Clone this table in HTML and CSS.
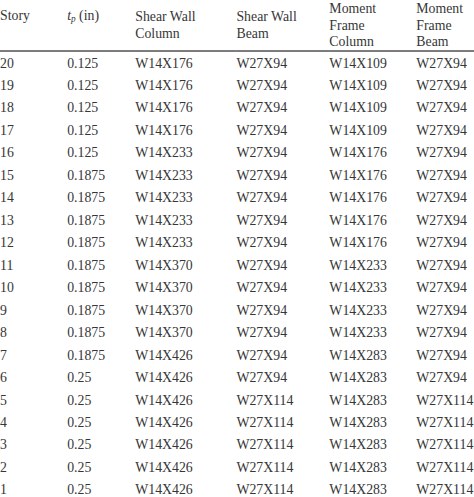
FILE: index.html
```html
<!DOCTYPE html>
<html>
<head>
<meta charset="utf-8">
<link rel="stylesheet" href="styles.css">
</head>
<body>
<div class="frame">
<table class="tbl">
<colgroup>
<col class="c1"><col class="c2"><col class="c3"><col class="c4"><col class="c5"><col class="c6">
</colgroup>
<thead>
<tr>
<th class="top">Story</th>
<th class="top"><i>t<sub>p</sub></i> (in)</th>
<th>Shear Wall<br>Column</th>
<th>Shear Wall<br>Beam</th>
<th>Moment<br>Frame<br>Column</th>
<th>Moment<br>Frame<br>Beam</th>
</tr>
</thead>
<tbody>
<tr><td>20</td><td>0.125</td><td>W14X176</td><td>W27X94</td><td>W14X109</td><td>W27X94</td></tr>
<tr><td>19</td><td>0.125</td><td>W14X176</td><td>W27X94</td><td>W14X109</td><td>W27X94</td></tr>
<tr><td>18</td><td>0.125</td><td>W14X176</td><td>W27X94</td><td>W14X109</td><td>W27X94</td></tr>
<tr><td>17</td><td>0.125</td><td>W14X176</td><td>W27X94</td><td>W14X109</td><td>W27X94</td></tr>
<tr><td>16</td><td>0.125</td><td>W14X233</td><td>W27X94</td><td>W14X176</td><td>W27X94</td></tr>
<tr><td>15</td><td>0.1875</td><td>W14X233</td><td>W27X94</td><td>W14X176</td><td>W27X94</td></tr>
<tr><td>14</td><td>0.1875</td><td>W14X233</td><td>W27X94</td><td>W14X176</td><td>W27X94</td></tr>
<tr><td>13</td><td>0.1875</td><td>W14X233</td><td>W27X94</td><td>W14X176</td><td>W27X94</td></tr>
<tr><td>12</td><td>0.1875</td><td>W14X233</td><td>W27X94</td><td>W14X176</td><td>W27X94</td></tr>
<tr><td>11</td><td>0.1875</td><td>W14X370</td><td>W27X94</td><td>W14X233</td><td>W27X94</td></tr>
<tr><td>10</td><td>0.1875</td><td>W14X370</td><td>W27X94</td><td>W14X233</td><td>W27X94</td></tr>
<tr><td>9</td><td>0.1875</td><td>W14X370</td><td>W27X94</td><td>W14X233</td><td>W27X94</td></tr>
<tr><td>8</td><td>0.1875</td><td>W14X370</td><td>W27X94</td><td>W14X233</td><td>W27X94</td></tr>
<tr><td>7</td><td>0.1875</td><td>W14X426</td><td>W27X94</td><td>W14X283</td><td>W27X94</td></tr>
<tr><td>6</td><td>0.25</td><td>W14X426</td><td>W27X94</td><td>W14X283</td><td>W27X94</td></tr>
<tr><td>5</td><td>0.25</td><td>W14X426</td><td>W27X114</td><td>W14X283</td><td>W27X114</td></tr>
<tr><td>4</td><td>0.25</td><td>W14X426</td><td>W27X114</td><td>W14X283</td><td>W27X114</td></tr>
<tr><td>3</td><td>0.25</td><td>W14X426</td><td>W27X114</td><td>W14X283</td><td>W27X114</td></tr>
<tr><td>2</td><td>0.25</td><td>W14X426</td><td>W27X114</td><td>W14X283</td><td>W27X114</td></tr>
<tr><td>1</td><td>0.25</td><td>W14X426</td><td>W27X114</td><td>W14X283</td><td>W27X114</td></tr>
</tbody>
</table>
</div>
</body>
</html>
```
FILE: styles.css
```css
html, body {
  margin: 0;
  padding: 0;
  background: #ffffff;
  overflow: hidden;
}
.frame {
  width: 474px;
  height: 497px;
  overflow: hidden;
}
.tbl {
  border-collapse: collapse;
  table-layout: fixed;
  width: 522px;
  font-family: "Liberation Serif", "Times New Roman", serif;
  font-size: 15px;
  color: #363636;
  transform: scaleX(0.92);
  transform-origin: 0 0;
}
.c1 { width: 73px; }
.c2 { width: 74px; }
.c3 { width: 110px; }
.c4 { width: 101px; }
.c5 { width: 94.5px; }
.c6 { width: 69.5px; }
.tbl th {
  font-weight: normal;
  text-align: left;
  padding: 0;
  line-height: 16.5px;
  height: 48px;
  vertical-align: middle;
  border-bottom: 2px solid #7c7c7c;
  white-space: nowrap;
}
.tbl th.top {
  vertical-align: top;
  padding-top: 7px;
  height: 41px;
}
.tbl sub {
  font-size: 10px;
  vertical-align: -2px;
  line-height: 0;
}
.tbl td {
  padding: 0;
  height: 22.47px;
  line-height: 22.47px;
  white-space: nowrap;
}
```
